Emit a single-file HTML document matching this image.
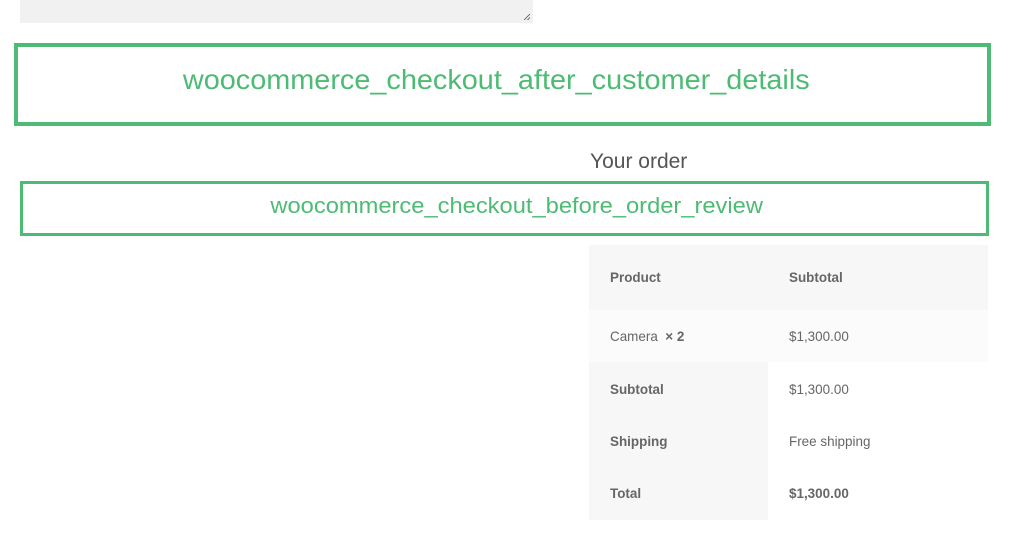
<!DOCTYPE html>
<html><head><meta charset="utf-8"><style>
*{margin:0;padding:0;box-sizing:border-box}
body{width:1024px;height:541px;background:#fff;position:relative;overflow:hidden;font-family:"Liberation Sans",sans-serif}
.ta{position:absolute;left:20px;top:0;width:513px;height:23px;background:#f0f1f0}
.ta:after{content:"";position:absolute;right:3px;bottom:3px;width:6px;height:6px;background:linear-gradient(135deg,transparent 45%,#777 45%,#777 55%,transparent 55%,transparent 75%,#777 75%,#777 85%,transparent 85%)}
.box{position:absolute;border:4px solid #4dbb73;display:flex;align-items:center;justify-content:center;color:#4dbb73;white-space:nowrap}
.box span{display:inline-block}
.h{position:absolute;left:590px;top:150px;font-size:21px;color:#555;transform:scaleX(1.0);transform-origin:left}
.t{position:absolute;font-size:14px;color:#666;transform:scaleX(.96);transform-origin:left}
.b{font-weight:bold}
.bg{position:absolute}
</style></head><body>
<div class="ta"></div>
<div class="box" style="left:14px;top:43px;width:977px;height:83px;font-size:28px;padding-bottom:10px"><span style="transform:translateX(-6px) scaleX(1.03)">woocommerce_checkout_after_customer_details</span></div>
<div class="h">Your order</div>
<div class="box" style="left:20px;top:181px;width:969px;height:55px;font-size:22px;border-width:3px;padding-bottom:6px"><span style="transform:translateX(12px) scaleX(1.077)">woocommerce_checkout_before_order_review</span></div>
<div class="bg" style="left:589px;top:245px;width:399px;height:65px;background:#f7f7f7"></div>
<div class="bg" style="left:589px;top:310px;width:399px;height:52px;background:#fbfbfb"></div>
<div class="bg" style="left:589px;top:362px;width:179px;height:158px;background:#f7f7f7"></div>
<div class="t b" style="left:610px;top:269px">Product</div>
<div class="t b" style="left:789px;top:269px">Subtotal</div>
<div class="t" style="left:610px;top:328px">Camera&nbsp; <b>× 2</b></div>
<div class="t" style="left:789px;top:328px">$1,300.00</div>
<div class="t b" style="left:610px;top:381px">Subtotal</div>
<div class="t" style="left:789px;top:381px">$1,300.00</div>
<div class="t b" style="left:610px;top:433px">Shipping</div>
<div class="t" style="left:789px;top:433px">Free shipping</div>
<div class="t b" style="left:610px;top:485px">Total</div>
<div class="t b" style="left:789px;top:485px">$1,300.00</div>
</body></html>
